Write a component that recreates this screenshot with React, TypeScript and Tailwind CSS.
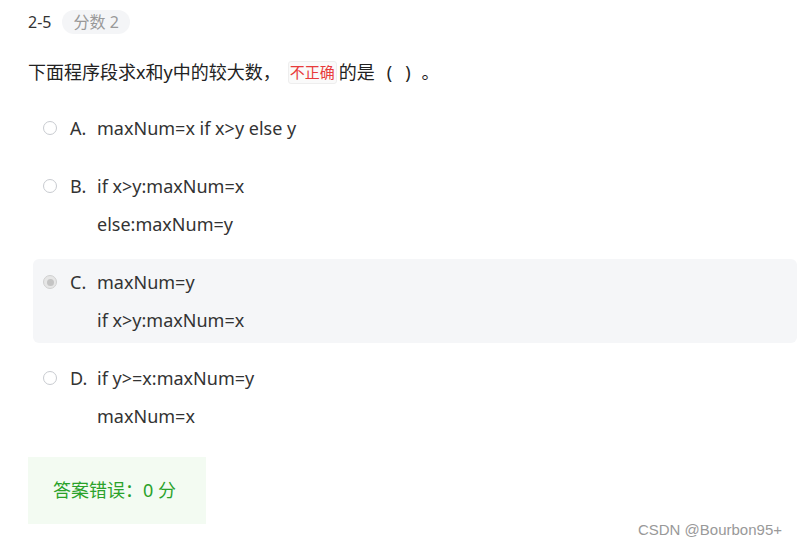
import React from "react";

const font = { fontFamily: '"Noto Sans", "Noto Sans CJK SC", sans-serif' };

function Radio({ checked }: { checked?: boolean }) {
  if (checked) {
    return (
      <span className="flex h-[14px] w-[14px] shrink-0 items-center justify-center rounded-full border border-[#d0d0d0] bg-[#e6e6e6]">
        <span className="h-[7px] w-[7px] rounded-full bg-[#c4c4c4]" />
      </span>
    );
  }
  return <span className="h-[14px] w-[14px] shrink-0 rounded-full border border-[#c8cbd0] bg-white" />;
}

function Option({ label, lines, checked }: { label: string; lines: string[]; checked?: boolean }) {
  return (
    <div className={`flex rounded-md py-[4px] pl-[10px] ${checked ? "bg-[#f5f6f8]" : ""}`}>
      <div className="flex h-[38px] w-[27px] items-center">
        <Radio checked={checked} />
      </div>
      <div className="w-[27px] text-[18px] leading-[38px] text-[#333]">{label}</div>
      <div className="text-[18px] leading-[38px] text-[#333]">
        {lines.map((l, i) => (
          <div key={i}>{l}</div>
        ))}
      </div>
    </div>
  );
}

export default function App() {
  return (
    <div className="relative h-[547px] w-[797px] overflow-hidden bg-white" style={font}>
      <div className="pl-[28px] pt-[10px]">
        <div className="flex h-[24px] items-center gap-[11px]">
          <span className="text-[16px] text-[#333]">2-5</span>
          <span className="flex h-[24px] items-center rounded-full bg-[#f4f5f7] px-[11px] text-[16px] text-[#999]">分数 2</span>
        </div>
        <div className="mt-[26px] flex items-center text-[18px] leading-[24px] text-[#222]">
          <span>下面程序段求x和y中的较大数，</span>
          <span className="ml-[7px] mr-[2px] rounded-[3px] border border-[#eeeeee] bg-[#fafafa] px-[1px] text-[15px] leading-[21px] text-[#e83b3b]">不正确</span>
          <span>的是</span>
          <span className="ml-[12px]">(</span>
          <span className="ml-[13px]">)</span>
          <span className="ml-[11px]">。</span>
        </div>
      </div>
      <div className="ml-[33px] mt-[21px] flex flex-col gap-[12px]">
        <Option label="A." lines={["maxNum=x if x>y else y"]} />
        <Option label="B." lines={["if x>y:maxNum=x", "else:maxNum=y"]} />
        <Option label="C." lines={["maxNum=y", "if x>y:maxNum=x"]} checked />
        <Option label="D." lines={["if y>=x:maxNum=y", "maxNum=x"]} />
      </div>
      <div className="ml-[28px] mt-[18px] flex h-[67px] w-[178px] items-center bg-[#f3fbf2] pl-[25px] text-[18px] text-[#2aa22a]">
        答案错误：0 分
      </div>
      <div
        className="absolute bottom-[6px] right-[15px] text-[15px] text-[#999]"
        style={{ fontFamily: '"Liberation Sans", Arial, sans-serif' }}
      >
        CSDN @Bourbon95+
      </div>
    </div>
  );
}
